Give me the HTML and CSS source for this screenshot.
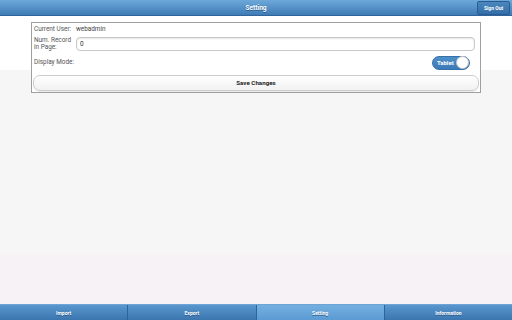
FILE: index.html
```html
<!DOCTYPE html>
<html lang="en">
<head>
  <meta charset="UTF-8" />
  <title>Setting</title>
  <link rel="stylesheet" href="styles.css">
</head>
<body>
  <div class="page">
    <header class="topbar">
      <h1>Setting</h1>
      <button class="signout">Sign Out</button>
    </header>

    <main class="content">
      <div class="form-box">
        <div class="row user-row">
          <span class="label">Current User:</span>
          <span class="value">webadmin</span>
        </div>
        <div class="row record-row">
          <label class="label" for="numRecord">Num. Record in Page:</label>
          <input type="text" id="numRecord" value="0" />
        </div>
        <div class="row mode-row">
          <span class="label nowrap">Display Mode:</span>
          <div class="toggle">
            <span>Tablet</span>
            <span class="knob"></span>
          </div>
        </div>
        <button class="save">Save Changes</button>
      </div>
    </main>

    <nav class="tabbar">
      <a class="tab">Import</a>
      <a class="tab">Export</a>
      <a class="tab active">Setting</a>
      <a class="tab">Information</a>
    </nav>
  </div>
</body>
</html>
```

FILE: styles.css
```css
* {
  box-sizing: border-box;
}
body {
  margin: 0;
  font-family: 'Roboto', 'Liberation Sans', sans-serif;
  color: #444;
  font-size: 6.4px;
}
.page {
  display: flex;
  flex-direction: column;
  height: 320px;
  width: 512px;
}
.topbar {
  height: 16px;
  display: flex;
  align-items: center;
  justify-content: center;
  position: relative;
  background: linear-gradient(#6ea8da, #3f7cb6);
  border-bottom: 1px solid #2f659c;
}
.topbar h1 {
  margin: 0;
  color: #fff;
  font-size: 6.5px;
  font-weight: 700;
  text-shadow: 0 1px 0 #2a5a8c;
}
.signout {
  position: absolute;
  right: 2px;
  top: 1px;
  height: 14px;
  width: 33px;
  padding: 0;
  font-family: inherit;
  font-size: 5px;
  font-weight: 700;
  color: #fff;
  background: linear-gradient(#4b86bf, #336ea8);
  border: 1px solid #2a5c90;
  border-radius: 2px;
}
.content {
  flex: 1;
  padding: 6px 31px 0;
  background: linear-gradient(#fff 0, #fff 54px, #f6f6f6 54px, #f6f6f6 238px, #f7f2f5 238px);
}
.form-box {
  background: #fff;
  border: 1px solid #a0a0a0;
  padding: 0 1px 1px;
}
.row {
  display: flex;
  align-items: center;
  padding-left: 1px;
}
.user-row {
  height: 12px;
}
.record-row {
  height: 17px;
  padding-right: 4px;
}
.label {
  flex-shrink: 0;
  width: 42px;
  line-height: 7px;
  color: #555;
}
.nowrap {
  white-space: nowrap;
}
.value {
  color: #444;
}
.row input {
  flex: 1;
  min-width: 0;
  height: 14px;
  margin: 1px 0 0;
  padding: 0 3px;
  font-family: inherit;
  font-size: 6.5px;
  color: #333;
  border: 1px solid #c8c8c8;
  border-radius: 4px;
  box-shadow: inset 0 1px 2px rgb(0 0 0 / 0.1);
}
.mode-row {
  height: 21px;
  justify-content: space-between;
  padding-right: 9px;
}
.toggle {
  display: flex;
  align-items: center;
  justify-content: space-between;
  width: 38px;
  height: 14px;
  padding: 0 0 0 4px;
  border-radius: 7px;
  background: linear-gradient(#4f90c8, #3b7ab8);
  border: 1px solid #3571ab;
  color: #fff;
  font-weight: 700;
  font-size: 6px;
}
.knob {
  width: 13px;
  height: 13px;
  border-radius: 50%;
  background: #fff;
  border: 1px solid #c4c4c4;
}
.save {
  display: block;
  width: 100%;
  height: 16px;
  margin-top: 2px;
  font-family: inherit;
  font-size: 6.2px;
  font-weight: 700;
  color: #222;
  background: linear-gradient(#fff, #f1f1f1);
  border: 1px solid #ccc;
  border-radius: 7px;
  box-shadow: 0 1px 1px rgb(0 0 0 / 0.08);
}
.tabbar {
  display: flex;
  height: 16px;
  border-top: 1px solid #6fa5d6;
}
.tab {
  flex: 1;
  display: flex;
  align-items: center;
  justify-content: center;
  color: #fff;
  font-size: 5px;
  font-weight: 700;
  text-shadow: 0 1px 0 #2a5a8c;
  background: linear-gradient(#5a97ce, #3b75af);
  border-right: 1px solid #2f649a;
}
.tab:last-child {
  border-right: none;
}
.tab.active {
  background: linear-gradient(#74afe0, #5b9bd2);
}
```
